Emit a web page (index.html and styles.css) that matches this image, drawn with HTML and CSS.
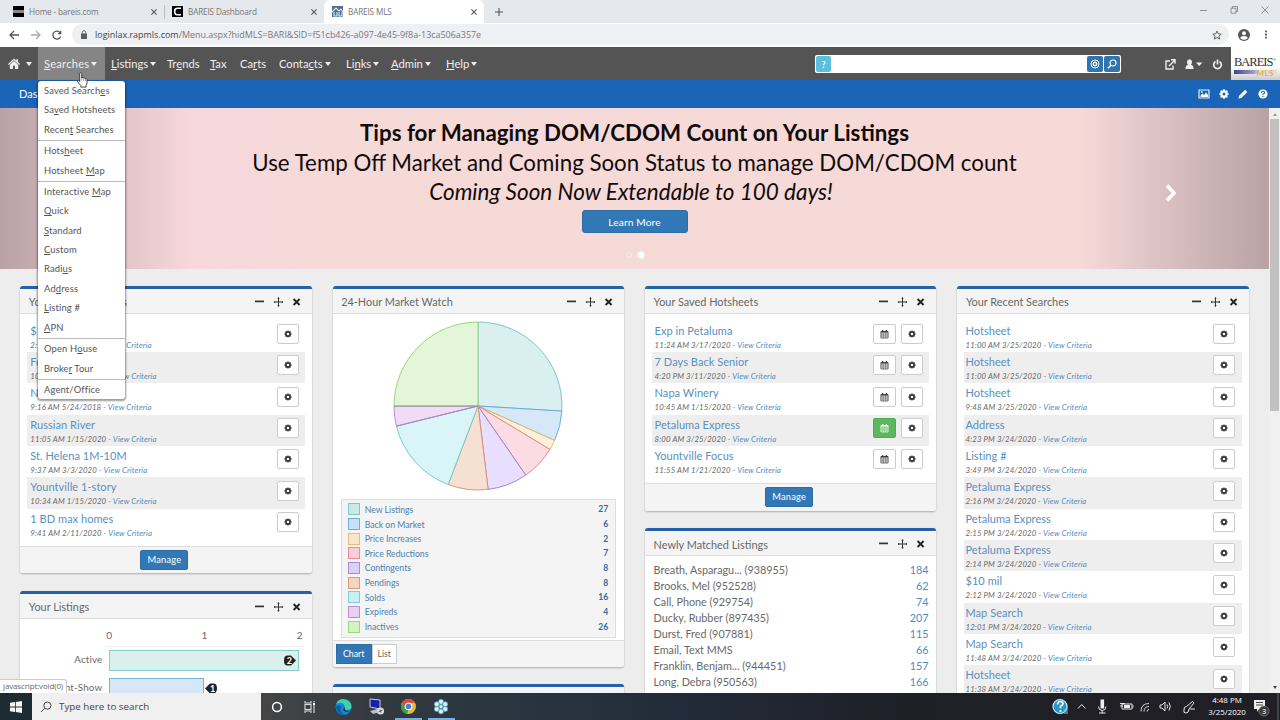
FILE: index.html
```html
<!DOCTYPE html>
<html lang="en">
<head>
<meta charset="utf-8">
<title>BAREIS MLS</title>
<link rel="stylesheet" href="styles.css">
</head>
<body>
<svg class="defs" aria-hidden="true">
  <symbol id="gear" viewBox="0 0 10 10"><circle cx="5" cy="5" r="2.6" fill="none" stroke="currentColor" stroke-width="2"/><path d="M5 .6v1.4M5 8v1.4M.6 5H2M8 5h1.4M1.9 1.9l1 1M7.1 7.1l1 1M8.1 1.9l-1 1M2.9 7.1l-1 1" stroke="currentColor" stroke-width="1.6"/></symbol>
  <symbol id="cal" viewBox="0 0 10 10"><path d="M1 2.4h8v7H1z" fill="none" stroke="currentColor" stroke-width=".8"/><path d="M1 2.6h8M3 .6v2M7 .6v2" stroke="currentColor" stroke-width="1.3"/><path d="M1 5h8M1 7.2h8M3.6 3.5v6M6.4 3.5v6" stroke="currentColor" stroke-width=".6"/></symbol>
  <symbol id="tools" viewBox="0 0 46 12"><path d="M0 5.4h9" stroke="currentColor" stroke-width="1.7"/><path d="M19 6h9M23.500 1.500v9" stroke="currentColor" stroke-width="1"/><path d="M18.700 6l1.500-1.300v2.600zM28.300 6l-1.500-1.300v2.600zM23.500 1.200l-1.300 1.500h2.600zM23.500 10.800l-1.300-1.500h2.600z" fill="currentColor"/><path d="M38.600 3l6 6M44.600 3l-6 6" stroke="#222" stroke-width="1.800"/></symbol>
  <symbol id="close" viewBox="0 0 8 8"><path d="M1.400 1.400l5.200 5.200M6.600 1.400L1.400 6.600" stroke="currentColor" stroke-width="1.100"/></symbol>
</svg>

<div class="tabs">
  <div class="tab tab-first"><span class="fav fav-home"></span><span class="tab-name">Home - bareis.com</span><svg class="tab-x"><use href="#close"/></svg></div>
  <div class="tab tab-second"><svg class="fav" viewBox="0 0 11 11"><path d="M0 0h11v11H0z"/><path d="M9 2.200H5.500Q2.600 2.200 2.600 5.500t2.900 3.300H9" fill="none" stroke="#fff" stroke-width="1.600"/></svg><span class="tab-name">BAREIS Dashboard</span><svg class="tab-x"><use href="#close"/></svg></div>
  <div class="tab tab-active"><svg class="fav" viewBox="0 0 11 11"><path d="M0 0h11v11H0z" fill="#4d6f93"/><path d="M0 6l4-4 3 3 2-2 2 3M2 6v4h3V6M7 6v4h3V6" fill="none" stroke="#e3edf6" stroke-width="1.100"/></svg><span class="tab-name">BAREIS MLS</span><svg class="tab-x"><use href="#close"/></svg></div>
  <svg class="newtab" viewBox="0 0 10 10"><path d="M5 1v8M1 5h8" stroke="#555" stroke-width="1.100"/></svg>
  <svg class="winctl" viewBox="0 0 70 10"><g fill="none" stroke="#888" stroke-width=".9"><path d="M0 5.500h7M31 3.200h5v5h-5zM32.500 3V1.500h5v5H36M61.500 1.500l7 7M68.500 1.500l-7 7"/></g></svg>
</div>

<div class="toolbar">
  <svg class="navs" viewBox="0 0 56 12"><g fill="none" stroke-width="1.300"><path d="M10 6H1.500M5 2L1 6l4 4" stroke="#555"/><path d="M22 6h8.500M27 2l4 4-4 4" stroke="#aaa"/><path d="M51 3.600A4 4 0 1 0 51.600 7.500" stroke="#555"/></g><path d="M52.300 1.200v4h-4z" fill="#555"/></svg>
  <div class="omni">
    <svg class="lock" viewBox="0 0 6 9"><path d="M0 3.500h6V9H0z" fill="#5a5d61"/><path d="M1.400 4V2.300a1.600 1.600 0 0 1 3.200 0V4" fill="none" stroke="#5a5d61" stroke-width=".9"/></svg>
    <span class="url"><b>loginlax.rapmls.com</b>/Menu.aspx?hidMLS=BARI&amp;SID=f51cb426-a097-4e45-9f8a-13ca506a357e</span>
    <svg class="star" viewBox="0 0 10 10"><path d="M5 1l1.200 2.800 3 .3-2.300 2 .7 3L5 7.500 2.400 9.100l.7-3-2.300-2 3-.3z" fill="none" stroke="#555" stroke-width=".9"/></svg>
  </div>
  <svg class="person" viewBox="0 0 12 12"><circle cx="6" cy="6" r="6" fill="#55585c"/><circle cx="6" cy="4.300" r="2" fill="#fff"/><path d="M2.300 9.300Q2.600 7 6 7t3.700 2.300Q8 10.800 6 10.800T2.300 9.300z" fill="#fff"/></svg>
  <svg class="dots" viewBox="0 0 2 10"><path d="M0 .5h2v2H0zM0 4h2v2H0zM0 7.500h2v2H0z" fill="#555"/></svg>
</div>

<nav class="nav">
  <div class="nav-item nav-home"><svg class="home" viewBox="0 0 12 11"><path d="M6 .5L0 6l.8.9L6 2.200l5.200 4.700.8-.9-2-1.900V1.200H8.400v1.500z"/><path d="M1.800 6.800L6 3l4.200 3.800V11H7V7.800H5V11H1.800z"/></svg><i class="caret"></i></div>
  <div class="nav-item nav-searches"><span><u>S</u>earches</span><i class="caret"></i></div>
  <div class="nav-item nav-listings"><span><u>L</u>istings</span><i class="caret"></i></div>
  <div class="nav-item nav-trends"><span>Tr<u>e</u>nds</span></div>
  <div class="nav-item nav-tax"><span><u>T</u>ax</span></div>
  <div class="nav-item nav-carts"><span>Ca<u>r</u>ts</span></div>
  <div class="nav-item nav-contacts"><span>Conta<u>c</u>ts</span><i class="caret"></i></div>
  <div class="nav-item nav-links"><span>Li<u>n</u>ks</span><i class="caret"></i></div>
  <div class="nav-item nav-admin"><span><u>A</u>dmin</span><i class="caret"></i></div>
  <div class="nav-item nav-help"><span><u>H</u>elp</span><i class="caret"></i></div>
  <div class="find">
    <span class="find-q">?</span><span class="find-input"></span>
    <span class="find-b"><svg viewBox="0 0 10 10"><circle cx="5" cy="5" r="4" fill="none" stroke="#fff"/><circle cx="5" cy="5" r="1.700" fill="none" stroke="#fff" stroke-width="1.400"/></svg></span>
    <span class="find-b"><svg viewBox="0 0 10 10"><circle cx="6" cy="4" r="3" fill="none" stroke="#fff" stroke-width="1.200"/><path d="M4 6.200L.8 9.300" stroke="#fff" stroke-width="1.600"/></svg></span>
  </div>
  <svg class="nav-icons" viewBox="0 0 60 14"><g fill="none" stroke="#eee" stroke-width="1.400"><path d="M6 4H2v8h7V8.500M5 9l6-6M7 2.700h4v4"/><path d="M51.500 4.500a3.800 3.800 0 1 0 4 0M53.500 2.500v5" stroke-width="1.700"/></g><path d="M21.500 12Q21.500 8 24 8Q23 6.500 23 4.800Q23.200 2.200 25.500 2.200T28 4.800Q28 6.500 27 8Q29.500 8 29.500 12zM32 5.500h6.400L35.200 9z" fill="#eee"/></svg>
  <div class="logo"><span class="logo-name">BAREIS<sup>®</sup></span><span class="logo-mls">MLS</span></div>
</nav>

<div class="subbar">
  <span>Dashboard</span>
  <svg class="sub-icons" viewBox="0 0 72 12"><path d="M1 2h10v8H1z" fill="none" stroke="#e3eefc" stroke-width="1.200"/><path d="M2.500 9V7.500l2-2 1.500 1.500 2-2.500 2 2.500v2zM3 3.200h1.600v1.600H3z" fill="#fff"/><circle cx="26" cy="6" r="2.600" fill="none" stroke="#fff" stroke-width="2.200"/><path d="M26 1.300v2M26 8.700v2M21.300 6h2M28.700 6h2M22.700 2.700l1.400 1.400M27.900 7.900l1.400 1.400M29.300 2.700l-1.400 1.400M24.100 7.900l-1.400 1.400" stroke="#fff" stroke-width="1.700"/><path d="M40.500 10.500l.6-2.800 6-6 2.200 2.200-6 6z" fill="#fff"/><circle cx="65" cy="6" r="4.600" fill="#fff"/><path d="M63.400 5q0-1.700 1.600-1.700t1.600 1.500Q66.600 5.900 65 6v1M65 7.800V9" fill="none" stroke="#1a65b7" stroke-width="1.100"/></svg>
</div>

<div class="view">
<div class="main">
  <div class="banner">
    <div class="b1">Tips for Managing DOM/CDOM Count on Your Listings</div>
    <div class="b2">Use Temp Off Market and Coming Soon Status to manage DOM/CDOM count</div>
    <div class="b3">Coming Soon Now Extendable to 100 days!</div>
    <div class="learn">Learn More</div>
    <div class="pips"><i></i><i class="on"></i></div>
    <svg class="next" viewBox="0 0 14 20"><path d="M3 2.500l7 7.500-7 7.500" fill="none" stroke="#fff" stroke-width="3.600"/></svg>
  </div>

  <div class="board">
    <div class="col">
      <section class="card">
        <header>Your Saved Searches<svg class="tools"><use href="#tools"/></svg></header>
        <ul class="rows">
          <li><div class="t">$10 mil</div><div class="s">2:12 PM 3/24/2020 - <a>View Criteria</a></div><svg class="btn"><use href="#gear"/></svg></li>
          <li><div class="t">Four Plex</div><div class="s">10:41 AM 1/15/2020 - <a>View Criteria</a></div><svg class="btn"><use href="#gear"/></svg></li>
          <li><div class="t">Napa Winery</div><div class="s">9:16 AM 5/24/2018 - <a>View Criteria</a></div><svg class="btn"><use href="#gear"/></svg></li>
          <li><div class="t">Russian River</div><div class="s">11:05 AM 1/15/2020 - <a>View Criteria</a></div><svg class="btn"><use href="#gear"/></svg></li>
          <li><div class="t">St. Helena 1M-10M</div><div class="s">9:37 AM 3/3/2020 - <a>View Criteria</a></div><svg class="btn"><use href="#gear"/></svg></li>
          <li><div class="t">Yountville 1-story</div><div class="s">10:34 AM 1/15/2020 - <a>View Criteria</a></div><svg class="btn"><use href="#gear"/></svg></li>
          <li><div class="t">1 BD max homes</div><div class="s">9:41 AM 2/11/2020 - <a>View Criteria</a></div><svg class="btn"><use href="#gear"/></svg></li>
        </ul>
        <footer><span class="manage">Manage</span></footer>
      </section>
      <section class="card">
        <header>Your Listings<svg class="tools"><use href="#tools"/></svg></header>
        <div class="bars">
          <div class="axis"><span>0</span><span>1</span><span>2</span></div>
          <div class="bar-row"><span class="bar-label">Active</span><div class="track"><div class="bar bar-active"><svg class="tag" viewBox="0 0 12 10"><path d="M3.500 0H7l5 5-5 5H3.500Q0 10 0 5t3.500-5z" fill="#222"/></svg><b>2</b></div></div></div>
          <div class="bar-row"><span class="bar-label">Contingent-Show</span><div class="track"><div class="bar bar-show"></div><span class="pin"><svg viewBox="0 0 12 10"><path d="M8.500 0H5L0 5l5 5h3.500Q12 10 12 5T8.500 0z" fill="#222"/></svg><b>1</b></span></div></div>
        </div>
      </section>
    </div>

    <div class="col">
      <section class="card">
        <header>24-Hour Market Watch<svg class="tools"><use href="#tools"/></svg></header>
        <svg class="pie" viewBox="-85 -85 170 170"><g stroke-width=".9">
          <path d="M0 0V-84A84 84 0 0 1 83.850 5.070z" fill="#daf0f0" stroke="#6fc3bf"/>
          <path d="M0 0L83.850 5.070A84 84 0 0 1 76.600 34.500z" fill="#d6e8f8" stroke="#5ba6d6"/>
          <path d="M0 0L76.600 34.500A84 84 0 0 1 71.900 43.450z" fill="#fdf1d8" stroke="#e6b35c"/>
          <path d="M0 0L71.900 43.450A84 84 0 0 1 47.700 69.100z" fill="#fcdce3" stroke="#e27c90"/>
          <path d="M0 0L47.700 69.100A84 84 0 0 1 10.100 83.400z" fill="#e8defd" stroke="#9a78cf"/>
          <path d="M0 0L10.100 83.400A84 84 0 0 1 -29.800 78.500z" fill="#f6e0d2" stroke="#d98e66"/>
          <path d="M0 0L-29.800 78.500A84 84 0 0 1 -81.600 20.100z" fill="#d9f5f7" stroke="#63c9cd"/>
          <path d="M0 0L-81.600 20.100A84 84 0 0 1 -84 0z" fill="#f0dcf6" stroke="#bb83cd"/>
          <path d="M0 0H-84A84 84 0 0 1 0 -84z" fill="#e3f6d7" stroke="#93d36d"/>
          <path d="M-84 0H0L-81.600 20.100" fill="none" stroke="#a785b6"/>
        </g></svg>
        <ul class="legend">
          <li class="k1">New Listings<b>27</b></li><li class="k2">Back on Market<b>6</b></li><li class="k3">Price Increases<b>2</b></li><li class="k4">Price Reductions<b>7</b></li><li class="k5">Contingents<b>8</b></li><li class="k6">Pendings<b>8</b></li><li class="k7">Solds<b>16</b></li><li class="k8">Expireds<b>4</b></li><li class="k9">Inactives<b>26</b></li>
        </ul>
        <footer class="switch"><span class="on">Chart</span><span>List</span></footer>
      </section>
      <section class="card"><header></header></section>
    </div>

    <div class="col">
      <section class="card">
        <header>Your Saved Hotsheets<svg class="tools"><use href="#tools"/></svg></header>
        <ul class="rows hotsheets">
          <li><div class="t">Exp in Petaluma</div><div class="s">11:24 AM 3/17/2020 - <a>View Criteria</a></div><svg class="btn cal"><use href="#cal"/></svg><svg class="btn"><use href="#gear"/></svg></li>
          <li><div class="t">7 Days Back Senior</div><div class="s">4:20 PM 3/11/2020 - <a>View Criteria</a></div><svg class="btn cal"><use href="#cal"/></svg><svg class="btn"><use href="#gear"/></svg></li>
          <li><div class="t">Napa Winery</div><div class="s">10:45 AM 1/15/2020 - <a>View Criteria</a></div><svg class="btn cal"><use href="#cal"/></svg><svg class="btn"><use href="#gear"/></svg></li>
          <li><div class="t">Petaluma Express</div><div class="s">8:00 AM 3/25/2020 - <a>View Criteria</a></div><svg class="btn cal green"><use href="#cal"/></svg><svg class="btn"><use href="#gear"/></svg></li>
          <li><div class="t">Yountville Focus</div><div class="s">11:55 AM 1/21/2020 - <a>View Criteria</a></div><svg class="btn cal"><use href="#cal"/></svg><svg class="btn"><use href="#gear"/></svg></li>
        </ul>
        <footer><span class="manage">Manage</span></footer>
      </section>
      <section class="card">
        <header>Newly Matched Listings<svg class="tools"><use href="#tools"/></svg></header>
        <ul class="match">
          <li>Breath, Asparagu... (938955)<a>184</a></li><li>Brooks, Mel (952528)<a>62</a></li><li>Call, Phone (929754)<a>74</a></li><li>Ducky, Rubber (897435)<a>207</a></li><li>Durst, Fred (907881)<a>115</a></li><li>Email, Text MMS<a>66</a></li><li>Franklin, Benjam... (944451)<a>157</a></li><li>Long, Debra (950563)<a>166</a></li>
        </ul>
      </section>
    </div>

    <div class="col">
      <section class="card">
        <header>Your Recent Searches<svg class="tools"><use href="#tools"/></svg></header>
        <ul class="rows recent">
          <li><div class="t">Hotsheet</div><div class="s">11:00 AM 3/25/2020 - <a>View Criteria</a></div><svg class="btn"><use href="#gear"/></svg></li>
          <li><div class="t">Hotsheet</div><div class="s">11:00 AM 3/25/2020 - <a>View Criteria</a></div><svg class="btn"><use href="#gear"/></svg></li>
          <li><div class="t">Hotsheet</div><div class="s">9:48 AM 3/25/2020 - <a>View Criteria</a></div><svg class="btn"><use href="#gear"/></svg></li>
          <li><div class="t">Address</div><div class="s">4:23 PM 3/24/2020 - <a>View Criteria</a></div><svg class="btn"><use href="#gear"/></svg></li>
          <li><div class="t">Listing #</div><div class="s">3:49 PM 3/24/2020 - <a>View Criteria</a></div><svg class="btn"><use href="#gear"/></svg></li>
          <li><div class="t">Petaluma Express</div><div class="s">2:16 PM 3/24/2020 - <a>View Criteria</a></div><svg class="btn"><use href="#gear"/></svg></li>
          <li><div class="t">Petaluma Express</div><div class="s">2:15 PM 3/24/2020 - <a>View Criteria</a></div><svg class="btn"><use href="#gear"/></svg></li>
          <li><div class="t">Petaluma Express</div><div class="s">2:14 PM 3/24/2020 - <a>View Criteria</a></div><svg class="btn"><use href="#gear"/></svg></li>
          <li><div class="t">$10 mil</div><div class="s">2:12 PM 3/24/2020 - <a>View Criteria</a></div><svg class="btn"><use href="#gear"/></svg></li>
          <li><div class="t">Map Search</div><div class="s">12:01 PM 3/24/2020 - <a>View Criteria</a></div><svg class="btn"><use href="#gear"/></svg></li>
          <li><div class="t">Map Search</div><div class="s">11:48 AM 3/24/2020 - <a>View Criteria</a></div><svg class="btn"><use href="#gear"/></svg></li>
          <li><div class="t">Hotsheet</div><div class="s">11:38 AM 3/24/2020 - <a>View Criteria</a></div><svg class="btn"><use href="#gear"/></svg></li>
        </ul>
      </section>
    </div>
  </div>
</div>
<div class="scroll"><i class="up"></i><div class="thumb"></div><i class="down"></i></div>
<div class="status">javascript:void(0)</div>
</div>

<div class="menu">
  <div class="group"><div>Saved Search<u>e</u>s</div><div>Sa<u>v</u>ed Hotsheets</div><div>Recen<u>t</u> Searches</div></div>
  <div class="group"><div>Hots<u>h</u>eet</div><div>Hotsheet <u>M</u>ap</div></div>
  <div class="group"><div>Interactive <u>M</u>ap</div><div><u>Q</u>uick</div><div><u>S</u>tandard</div><div><u>C</u>ustom</div><div>Radi<u>u</u>s</div><div>Ad<u>d</u>ress</div><div><u>L</u>isting #</div><div><u>A</u>PN</div></div>
  <div class="group"><div>Open H<u>o</u>use</div><div>Broke<u>r</u> Tour</div></div>
  <div class="group"><div>Agent/Office</div></div>
</div>
<svg class="hand" viewBox="0 0 12 16"><path d="M3.200 9.500V1.800Q3.200.6 4.200.6t1 1.200v4.400l.4-.7q1.200-.4 1.500.6 1.300-.6 1.700.5 1.500-.3 1.700 1v3.200q0 1.500-.9 2.500v1.800H4.300v-1.600L1 9.800q-.5-1.200.5-1.600.8-.2 1.700 1.300z" fill="#fff" stroke="#333" stroke-width=".9"/><path d="M5.300 6v2.600M7.200 6.500v2.300M8.900 7v2" stroke="#555" stroke-width=".6"/></svg>

<div class="taskbar">
  <div class="start"><svg viewBox="0 0 12 12"><path d="M0 1.700l5-.7v4.600H0zM5.800.9L12 0v5.600H5.800zM0 6.400h5V11l-5-.7zM5.800 6.400H12V12l-6.200-.9z" fill="#f4f8fa"/></svg></div>
  <div class="tsearch"><svg viewBox="0 0 12 12"><circle cx="7.400" cy="4.600" r="3.600" fill="none" stroke="#444"/><path d="M4.800 7.200L1 11" stroke="#444"/></svg>Type here to search</div>
  <svg class="apps" viewBox="0 0 199 27">
    <circle cx="16" cy="14" r="4.400" fill="none" stroke="#fff" stroke-width="1.500"/>
    <path d="M44 8v2h6V8M44 20v-2h6v2M44 11.500h6v5h-6zM53 8v1.500M53 12v8" fill="none" stroke="#ddd" stroke-width="1.100"/><path d="M52 10h2v2h-2z" fill="#fff"/>
    <circle cx="82.500" cy="14" r="8" fill="#1583d3"/><path d="M75 11Q77 6 82.500 6q8 1 8 8 0 3-5 3-3 0-2-3 0-4-4-4-3 0-4.500 1z" fill="#3fd2a4"/><path d="M75 13q1 8 8 9-5-3-3-9-2-1-5 0z" fill="#0b5ca8"/><path d="M84 14q-1 4 3 4l3-1q-4 3-7 1-2-2 1-4z" fill="#263038"/>
    <path d="M109 6l10 1v9l-10-2z" fill="#1522a8" stroke="#c3c9e2"/><path d="M109 18l7-2 3 3-7 2z" fill="#b9bdc4"/><circle cx="119.500" cy="18" r="3.600" fill="#d9ddd5"/><path d="M117.500 19l4-2M119 16.500l1 3" stroke="#5c655c"/>
    <circle cx="147.500" cy="13.500" r="7.500" fill="#e8b83c"/><path d="M141 9.700A7.500 7.500 0 0 1 154 9.700H147.500L144.500 15z" fill="#d84b3c"/><path d="M141 9.700l3.500 5.300 3 1.500-1.500 4.400A7.500 7.500 0 0 1 141 9.700z" fill="#3d9c4f"/><circle cx="147.500" cy="13.500" r="3.800" fill="#fff"/><circle cx="147.500" cy="13.500" r="2.800" fill="#3f7fdd"/>
    <g fill="#d8f3fb" stroke="#4c9bb7" stroke-width=".8"><circle cx="180" cy="8.800" r="2.500"/><circle cx="184.200" cy="11.200" r="2.500"/><circle cx="184.200" cy="16" r="2.500"/><circle cx="180" cy="18.400" r="2.500"/><circle cx="175.800" cy="16" r="2.500"/><circle cx="175.800" cy="11.200" r="2.500"/><circle cx="180" cy="13.600" r="2"/></g>
    <path d="M134 26h27M167 26h27" stroke="#77aee3" stroke-width="2"/>
  </svg>
  <svg class="tray" viewBox="0 0 152 27">
    <circle cx="10" cy="13.500" r="7" fill="#2496c9" stroke="#d6edf7" stroke-width="1.200"/><path d="M7.600 11.500q0-3 2.700-3 2.600 0 2.600 2.200 0 1.600-2.400 2.600v2M10.500 17v2" fill="none" stroke="#fff" stroke-width="1.700"/><path d="M15 16v5M17 14v7" stroke="#6fd0ee"/>
    <g fill="none" stroke="#e8e8e8"><path d="M28 15.500l3.700-4 3.700 4"/><path d="M48.500 13.500q0 4 3.700 4t3.700-4M52.200 17.500v2.500M49 20h6.500"/><path d="M72 11v5h10v-5zM70 10.500h5M70 13h3M83 12.500v2"/><path d="M91 18.500q0-8 8-8M94 18.500q0-5 5-5M97 18.500q0-2 2-2" stroke-width=".9"/><path d="M110 12h2l3-3v9l-3-3h-2zM117 11.500q1.500 2 0 4M119 9.500q2.600 4 0 8" /><path d="M134 17q-1 3 2 3t3-4l5-6-1.500-1.500-6 5q-3 0-2.500 3.500M140 16h5"/></g><path d="M50.500 6.500h3.600v9h-3.600zM74 12h6v3h-6z" fill="#eee"/>
  </svg>
  <div class="clock"><div>4:48 PM</div><div>3/25/2020</div></div>
  <svg class="note" viewBox="0 0 28 27"><path d="M3 7h11v9H8l-2 3v-3H3z" fill="#eee"/><path d="M5 9.500h7M5 12h7" stroke="#444"/><circle cx="13" cy="18" r="5" fill="#3a3a3c" stroke="#888" stroke-width=".7"/><text x="10.800" y="21" fill="#fff" font-size="8">3</text><path d="M27 0v27" stroke="#777" stroke-width=".8"/></svg>
</div>
</body>
</html>
```
FILE: styles.css
```css
* { box-sizing: border-box; }
body { margin: 0; width: 1280px; height: 720px; overflow: hidden; display: flex; flex-direction: column; position: relative; background: #ededed; color: #686868; font-family: Lato, "Open Sans", sans-serif; font-size: 11px; }
ul { list-style: none; margin: 0; padding: 0; }
.defs { position: absolute; width: 0; height: 0; }

/* browser chrome */
.tabs { flex: 0 0 23px; display: flex; align-items: center; background: #e5e8ed; font: 8.2px "Open Sans", sans-serif; letter-spacing: -.15px; color: #777; }
.tab { display: flex; align-items: center; height: 23px; padding: 0 6px 0 13px; }
.tab-first { width: 165px; border-right: 1px solid #bbb; height: 14px; }
.tab-second { width: 159px; padding-left: 7px; }
.tab-active { width: 160px; background: #fff; border-radius: 6px 6px 0 0; padding-left: 8px; }
.fav { width: 11px; height: 11px; margin-right: 5px; }
.fav-home { background: linear-gradient(#000 40%, #888 40% 60%, #000 60%); }
.tab-name { flex: 1; white-space: nowrap; }
.tab-x { width: 8px; height: 8px; color: #555; }
.newtab { width: 10px; height: 10px; margin-left: 10px; }
.winctl { width: 70px; height: 10px; margin: -4px 10px 0 auto; }
.toolbar { flex: 0 0 24px; display: flex; align-items: center; background: #fff; padding: 0 13px 1px 9px; }
.navs { width: 56px; height: 12px; }
.omni { flex: 1; height: 21px; margin: 0 9px 0 7px; padding: 0 7px 0 9px; display: flex; align-items: center; background: #eff0f4; border-radius: 11px; font: 8.95px "Open Sans", sans-serif; color: #777; }
.lock { width: 6px; height: 9px; margin-right: 8px; }
.url { flex: 1; white-space: nowrap; }
.url b { font-weight: 400; color: #444; }
.star { width: 10px; height: 10px; }
.person { width: 12px; height: 12px; }
.dots { width: 2px; height: 9px; margin-left: 15px; }

/* application bars */
.nav { flex: 0 0 33px; display: flex; align-items: stretch; background: #545454; color: #eee; font-size: 11.2px; }
.nav-item { display: flex; align-items: center; gap: 2px; padding: 0 0 0 7px; white-space: nowrap; }
u { text-underline-offset: 1px; text-decoration-thickness: 1px; }
.caret { border: 3.5px solid transparent; border-top: 4px solid #eee; border-bottom: 0; }
.home { width: 12px; height: 11px; fill: #eee; margin-right: 4px; }
.nav-home { width: 38px; padding-left: 8px; }
.nav-searches { width: 67px; background: #858585; padding-left: 6px; letter-spacing: .2px; }
.nav-listings { width: 55px; padding-left: 6px; }
.nav-trends { width: 43px; }
.nav-tax { width: 30px; }
.nav-carts { width: 39px; }
.nav-contacts { width: 67px; }
.nav-links { width: 45px; }
.nav-admin { width: 55px; }
.nav-help { width: 60px; }
.find { width: 306px; height: 18px; margin: 8px 0 0 316px; display: flex; gap: 1px; padding: 1px; background: #fff; border-radius: 2px; }
.find-q { width: 15px; background: #5bc0de; border-radius: 2px; color: #fff; font-size: 9px; font-weight: 700; display: grid; place-items: center; }
.find-input { flex: 1; }
.find-b { width: 16px; background: #3274ae; border-radius: 2px; display: grid; place-items: center; }
.find-b svg { width: 10px; height: 10px; }
.nav-icons { width: 60px; height: 14px; margin: 10px 6px 0 43px; }
.logo { width: 49px; margin-left: auto; height: 33px; padding: 5px 3px; background: linear-gradient(#fff 60%, #ccc); color: #333; font-family: "Liberation Serif", serif; display: flex; flex-direction: column; }
.logo-name { font-size: 12.5px; line-height: 16px; letter-spacing: -1px; white-space: nowrap; }
.logo-name sup { font-size: 5px; }
.logo-mls { height: 6px; text-align: right; padding-right: 3px; font: 700 8px/6px Lato, sans-serif; color: #e2ad5d; background: linear-gradient(90deg, #3c4494, #9b9bc4 45%, #e9ddc8 60%) 0 0 / 100% 4px no-repeat; letter-spacing: .5px; }
.subbar { flex: 0 0 28px; display: flex; align-items: center; padding: 0 10px 1px 19px; background: #1a65b7; color: #fff; font-size: 11px; }
.sub-icons { width: 72px; height: 12px; margin-left: auto; }

/* page */
.view { flex: 0 0 585px; display: flex; position: relative; overflow: hidden; }
.main { width: 1269px; }
.banner { height: 160.5px; padding-top: 10px; position: relative; text-align: center; color: #120b0b; white-space: nowrap; background: linear-gradient(90deg, rgba(0,0,0,.25), rgba(0,0,0,0) 190px calc(100% - 190px), rgba(0,0,0,.25)), linear-gradient(90deg, #f7d7dc 15%, #f5dad8 25% 85%, #f7d7dc); }
.b1 { font-size: 22.33px; font-weight: 700; line-height: 30px; }
.b2 { font-size: 22.3px; line-height: 29px; }
.b3 { font-size: 22.5px; line-height: 29px; font-style: italic; padding-right: 7px; }
.learn { width: 106px; height: 23px; margin: 4px auto 0; line-height: 22px; background: #3378b6; border: 1px solid #2d6da6; border-radius: 3px; color: #fff; font-size: 10.2px; letter-spacing: .1px; }
.pips { display: flex; justify-content: center; align-items: center; gap: 5px; margin-top: 18px; padding-left: 1px; }
.pips i { width: 6px; height: 6px; border: 1px solid #fbeeee; border-radius: 50%; }
.pips .on { width: 8px; height: 8px; background: #fff; }
.next { position: absolute; left: 1164px; top: 75px; width: 14px; height: 20px; }
.board { display: grid; grid-template-columns: repeat(4, 291.4px); column-gap: 21px; padding: 17px 0 0 20.3px; align-items: start; }
.col { display: flex; flex-direction: column; gap: 17.3px; }
.card { background: #fff; border-top: 3px solid #2560a8; border-radius: 3px; box-shadow: 0 1px 2px rgba(0,0,0,.28); }
.card header { height: 25px; display: flex; align-items: center; padding: 2px 11px 0 8.5px; background: #f4f4f4; border-bottom: 1px solid #ddd; font-size: 10.9px; }
.tools { width: 46px; height: 12px; margin-left: auto; color: #333; }
.rows { padding: 7px 7px 6px; }
.rows li { height: 31.35px; display: grid; grid-template: 19px 12px / 1fr auto auto; padding: 0 6px 0 3px; }
.rows li:nth-child(even) { background: #eee; }
.recent li { padding: 0 7px 0 1px; }
.hotsheets li { padding-left: 2.500px; }
.t { color: #5a90be; font-size: 11px; line-height: 19px; letter-spacing: .05px; white-space: nowrap; }
.s { grid-column: 1; grid-row: 2; font-size: 7.8px; line-height: 10px; font-style: italic; letter-spacing: .15px; white-space: nowrap; }
.s a, .match a { color: #4f8bbf; }
.btn { grid-row: 1 / 3; width: 22px; height: 20px; margin-top: 3.5px; padding: 5px 6px; background: #fff; border: 1px solid #ccc; border-radius: 2px; color: #333; }
.cal { width: 23px; margin-right: 5px; padding: 4px 6px; }
.green { background: #5cb85c; border-color: #4cae4c; color: #fff; }
.card footer { height: 27.5px; display: flex; justify-content: center; align-items: center; padding-right: 3px; background: #f4f4f4; border-top: 1px solid #ddd; border-radius: 0 0 3px 3px; }
.manage { width: 48px; height: 20px; line-height: 18px; background: #3378b6; border: 1px solid #2d6da6; border-radius: 2px; color: #fff; font-size: 9.3px; letter-spacing: .2px; text-align: center; }
.pie { display: block; width: 170px; height: 170px; margin: 7px auto 8px; }
.legend { margin: 0 8px 2px; height: 139px; padding: 2.6px 7px; background: #f4f4f4; border: 1px solid #ddd; font-size: 8.7px; color: #4f81ad; }
.legend li { height: 14.65px; display: flex; align-items: center; }
.legend li::before { content: ""; width: 10px; height: 10px; margin: 0 4.5px 0 -.5px; border: 1px solid var(--l); background: var(--f); }
.legend b { margin-left: auto; color: #2f6ba0; font-size: 8.5px; }
.k1 { --f: #c9ebe6; --l: #7fc8be; } .k2 { --f: #c6e0f7; --l: #71aede; } .k3 { --f: #fbe6c4; --l: #e6bc76; }
.k4 { --f: #fbcdd5; --l: #e78c9c; } .k5 { --f: #ddd0f8; --l: #a98ad6; } .k6 { --f: #f5d5c1; --l: #d79b7a; }
.k7 { --f: #c9f1f1; --l: #7cd0d2; } .k8 { --f: #ebcff1; --l: #c28bd0; } .k9 { --f: #d6f2c1; --l: #9ed67c; }
.card .switch { justify-content: flex-start; padding-left: 3px; }
.switch span { width: 25px; height: 20px; line-height: 18px; border: 1px solid #ccc; background: #fff; font-size: 8.8px; text-align: center; }
.switch .on { width: 36px; background: #3378b6; border-color: #2d6da6; color: #fff; }
.match { padding: 5.5px 8px 5.5px 8.5px; font-size: 10.8px; }
.match li { height: 16px; display: flex; justify-content: space-between; align-items: center; }
.bars { height: 95px; font-size: 9.8px; }
.axis { display: flex; justify-content: space-between; margin: 0 9px 3px 86px; height: 28.5px; line-height: 33px; border-bottom: 1px solid #eee; font-size: 10px; }
.bar-row { display: flex; height: 28px; }
.bar-label { width: 82px; margin-right: 6.7px; line-height: 19px; text-align: right; letter-spacing: .15px; white-space: nowrap; }
.track { width: 190px; display: flex; align-items: flex-start; }
.bar { height: 21px; border: 1px solid #83cfc8; border-left-color: #bbb; background: #d9f0ef; }
.bar-active { width: 190px; position: relative; }
.bar-show { width: 95px; background: #d6e8f8; border-color: #77b3dc; }
.tag { position: absolute; right: 2px; top: 4px; width: 12px; height: 11px; }
.bar b { position: absolute; right: 6px; top: 4px; line-height: 11px; font-size: 9px; color: #fff; }
.pin { width: 12px; height: 11px; margin: 5px 0 0 1px; position: relative; }
.pin svg { display: block; width: 12px; height: 11px; }
.pin b { position: absolute; left: 5px; top: 0; font-size: 9px; line-height: 11px; color: #fff; }
.scroll { width: 11px; display: flex; flex-direction: column; align-items: center; background: #f0f0f0; padding: 5px 0 4px; }
.thumb { width: 9px; height: 292px; margin-top: 3px; background: #c1c1c1; }
.up { border: 2.5px solid transparent; border-bottom: 3px solid #999; border-top: 0; }
.down { margin-top: auto; border: 2.5px solid transparent; border-top: 3px solid #444; border-bottom: 0; }
.status { position: absolute; left: 0; bottom: 0; width: 67px; height: 14px; padding-left: 3px; background: #fff; border: 1px solid #ccc; border-width: 1px 1px 0 0; border-radius: 0 3px 0 0; font: 7.9px/13px "Open Sans", sans-serif; letter-spacing: -.1px; color: #666; white-space: nowrap; }

/* overlays */
.menu { position: absolute; left: 38px; top: 81px; width: 87px; height: 318px; background: #fff; border-radius: 3px; box-shadow: 0 1px 2px 1px rgba(0,0,0,.4); font-size: 9.4px; letter-spacing: .15px; color: #555; }
.group div { height: 19.38px; line-height: 20px; padding-left: 6px; white-space: nowrap; }
.group div:last-child:not(:first-child) { height: 20.4px; padding-top: .7px; }
.group:not(:last-child) { border-bottom: 1px solid #bbb; }
.hand { position: absolute; left: 76px; top: 72px; width: 13px; height: 16px; }

/* taskbar */
.taskbar { flex: 0 0 27px; display: flex; background: linear-gradient(90deg, #454545 260px, #31393f 390px, #26333f 560px, #222a38 700px, #1f2027 900px, #211f25); color: #fff; font-family: "Open Sans", sans-serif; }
.start { width: 32px; background: #1e2b33; display: grid; place-items: center; }
.start svg { width: 12px; height: 12px; }
.tsearch { width: 229px; background: #f0f0f0; color: #444; display: flex; align-items: center; gap: 7px; padding: 0 0 0 8px; font-size: 9.8px; white-space: nowrap; }
.tsearch svg { width: 12px; height: 12px; }
.apps { width: 199px; height: 27px; }
.tray { width: 152px; height: 27px; margin-left: auto; }
.clock { width: 50px; font-size: 7.9px; line-height: 11.9px; padding-top: 2px; text-align: center; white-space: nowrap; }
.note { width: 28px; height: 27px; margin: 0 1px 0 -1px; }
```
